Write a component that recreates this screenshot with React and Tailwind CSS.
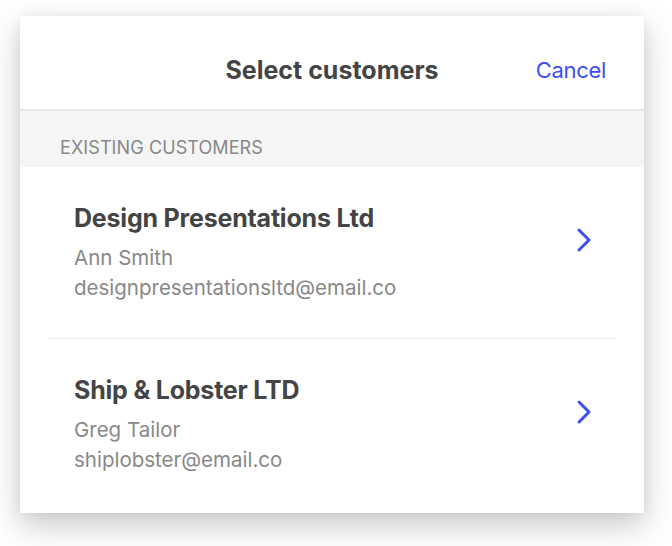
import React from 'react';

const customers = [
    { name: 'Design Presentations Ltd', contact: 'Ann Smith', email: 'designpresentationsltd@email.co' },
    { name: 'Ship & Lobster LTD', contact: 'Greg Tailor', email: 'shiplobster@email.co' },
];

const Chevron = () => (
    <svg width="18" height="26" viewBox="0 0 18 26" fill="none" className="mt-[24px] shrink-0">
        <path d="M3 3 L13 13 L3 23" stroke="#3d4ef5" strokeWidth="3" strokeLinecap="round" strokeLinejoin="round" />
    </svg>
);

const App = () => {
    return (
        <div className="min-h-screen bg-white pt-4 px-5" style={{ fontFamily: 'Inter, "Noto Sans", sans-serif' }}>
            <div className="bg-white w-[624px] shadow-[0_12px_30px_rgba(0,0,0,0.22),0_0_10px_rgba(0,0,0,0.06)]">
                {/* Header */}
                <div className="relative border-b-2 border-[#e6e6e6] pt-[39px] pb-[24px] text-center">
                    <h1 className="text-[25px] leading-[30px] font-bold text-[#444]">Select customers</h1>
                    <button className="absolute right-[38px] top-[39px] text-[22px] leading-[30px] text-[#3d4ef5] tracking-[-0.3px]">Cancel</button>
                </div>

                {/* Section label */}
                <div className="bg-[#f5f5f5] px-10 pt-[26px] pb-[8px]">
                    <p className="text-[18px] leading-[22px] uppercase text-[#888] tracking-[0.1px]">Existing customers</p>
                </div>

                {/* Rows */}
                {customers.map((c, i) => (
                    <div key={c.email}>
                        {i > 0 && <div className="mx-7 h-px bg-[#eeeeee]" />}
                        <div className={`flex items-start justify-between pl-[54px] pr-[50px] pt-[36px] ${i === 0 ? 'pb-[35px]' : 'pb-[38px]'}`}>
                            <div>
                                <h3 className="text-[25px] leading-[30px] font-bold text-[#444] tracking-[-0.2px] mb-[10px]">{c.name}</h3>
                                <p className="text-[20.5px] leading-[30px] text-[#888]">{c.contact}</p>
                                <p className="text-[20.5px] leading-[30px] text-[#888]">{c.email}</p>
                            </div>
                            <Chevron />
                        </div>
                    </div>
                ))}
            </div>
        </div>
    );
};

export default App;
